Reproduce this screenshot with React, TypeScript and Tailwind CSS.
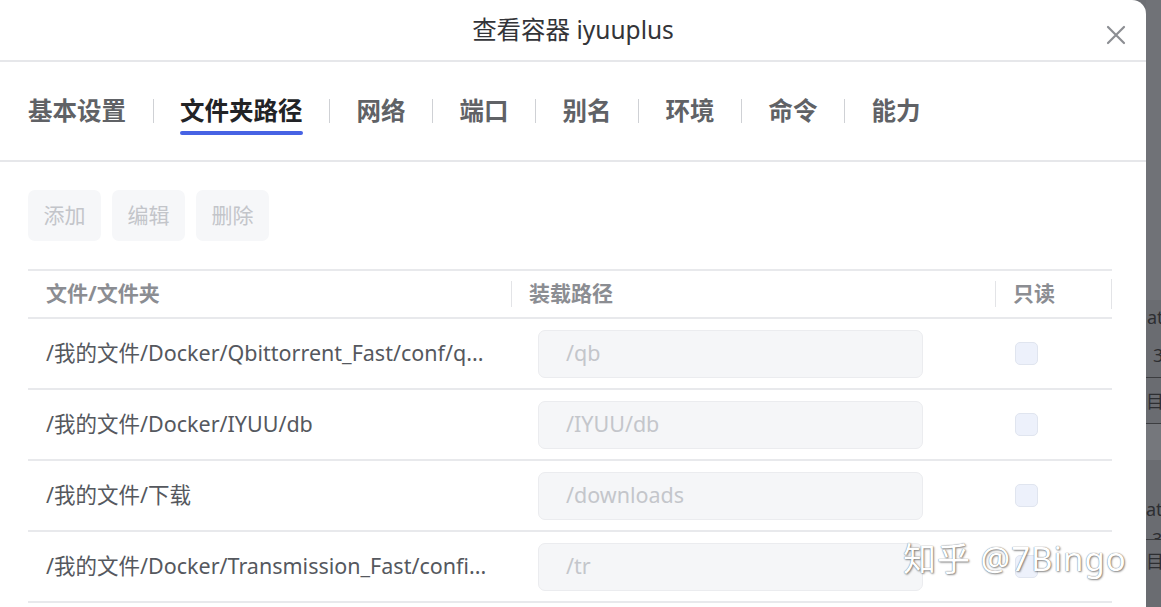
import React from 'react';

const tabs = ['基本设置', '文件夹路径', '网络', '端口', '别名', '环境', '命令', '能力'];

const rows = [
  { src: '/我的文件/Docker/Qbittorrent_Fast/conf/q...', dst: '/qb' },
  { src: '/我的文件/Docker/IYUU/db', dst: '/IYUU/db' },
  { src: '/我的文件/下载', dst: '/downloads' },
  { src: '/我的文件/Docker/Transmission_Fast/confi...', dst: '/tr' },
];

const font = "font-['Noto_Sans','Noto_Sans_CJK_SC',sans-serif]";

const Tab: React.FC<{ label: string; active: boolean; last: boolean }> = ({ label, active, last }) => (
  <div className="flex items-center">
    <div className="relative">
      <span className={`text-[24.5px] leading-[32px] font-bold ${active ? 'text-[#222326]' : 'text-[#606266]'}`}>{label}</span>
      {active && <div className="absolute left-0 right-0 -bottom-[8px] h-[4px] rounded-full bg-[#4763e4]" />}
    </div>
    {!last && <div className="mx-[26.5px] h-[24px] w-px bg-[#cfd1d5]" />}
  </div>
);

const App: React.FC = () => {
  return (
    <div className={`relative flex h-[607px] w-[1161px] overflow-hidden bg-[#6d6f74] ${font}`}>
      <div className="flex h-full w-[1146px] flex-col rounded-tr-[14px] bg-white">
        {/* header */}
        <div className="relative flex h-[62px] shrink-0 items-center justify-center border-b-2 border-[#e6e7ea]">
          <span className="text-[24.5px] text-[#333438]">查看容器 iyuuplus</span>
          <button className="absolute right-[20px] top-[25px] text-[#8c8e93]">
            <svg width="20" height="20" viewBox="0 0 20 20" fill="none" stroke="currentColor" strokeWidth="2.2" strokeLinecap="round">
              <path d="M2 2L18 18M18 2L2 18" />
            </svg>
          </button>
        </div>

        {/* tabs */}
        <div className="flex h-[100px] shrink-0 items-center border-b-2 border-[#e6e7ea] px-[28px]">
          {tabs.map((t, i) => (
            <Tab key={t} label={t} active={i === 1} last={i === tabs.length - 1} />
          ))}
        </div>

        {/* content */}
        <div className="flex flex-col pl-[28px] pr-[34px] pt-[28px]">
          <div className="flex gap-[11px]">
            {['添加', '编辑', '删除'].map((b) => (
              <button key={b} className="flex h-[51px] w-[73px] items-center justify-center rounded-[7px] bg-[#f6f7f9] text-[21px] text-[#c3c5ca]">
                {b}
              </button>
            ))}
          </div>

          <div className="mt-[28px] flex flex-col">
            <div className="flex h-[50px] items-center border-y-2 border-[#e8e9ec] text-[21px] font-bold text-[#8b8d92]">
              <div className="w-[483px] pl-[18px]">文件/文件夹</div>
              <div className="h-[26px] w-px bg-[#e3e4e7]" />
              <div className="w-[483px] pl-[17px]">装载路径</div>
              <div className="h-[26px] w-px bg-[#e3e4e7]" />
              <div className="flex-1 pl-[17px]">只读</div>
              <div className="h-[30px] w-px bg-[#e3e4e7]" />
            </div>
            {rows.map((r) => (
              <div key={r.src} className="flex h-[71px] items-center border-b-2 border-[#e8e9ec]">
                <div className="w-[484px] truncate pl-[18px] pr-[10px] text-[21.5px] text-[#55585e]">{r.src}</div>
                <div className="w-[484px] pl-[26px]">
                  <div className="flex h-[48px] w-[385px] items-center rounded-[7px] border border-[#ebecef] bg-[#f5f6f8] pl-[27px] text-[21.5px] text-[#c4c6cb]">
                    {r.dst}
                  </div>
                </div>
                <div className="flex-1 pl-[19px]">
                  <div className="h-[23px] w-[23px] rounded-[5px] border border-[#e0e5ef] bg-[#edf1fb]" />
                </div>
              </div>
            ))}
          </div>
        </div>
      </div>

      {/* backdrop peek */}
      <div className="flex flex-1 flex-col overflow-hidden whitespace-nowrap text-[18px] leading-none text-[#2d2e31]">
        <div className="h-[300px] shrink-0 bg-[#707277]" />
        <div className="h-[78px] shrink-0 border-b border-[#3c3d40] bg-[#6a6c71] pl-[1px]">
          <div className="pt-[8px]">at</div>
          <div className="pl-[6px] pt-[20px]">3</div>
        </div>
        <div className="h-[46px] shrink-0 border-b border-[#3c3d40] bg-[#6a6c71] pt-[14px]">目多</div>
        <div className="h-[36px] shrink-0 bg-[#75777c]" />
        <div className="h-[80px] shrink-0 border-b border-[#3c3d40] bg-[#6a6c71]">
          <div className="pt-[40px]">at</div>
          <div className="pl-[6px] pt-[12px]">3</div>
        </div>
        <div className="flex-1 bg-[#6a6c71] pt-[12px]">目多</div>
      </div>

      {/* watermark */}
      <div className="pointer-events-none absolute left-[903px] top-[534px] text-[33px] tracking-[1px] text-white [text-shadow:0_0_1px_#555,1px_1px_2px_rgba(0,0,0,0.45)]">
        知乎 @7Bingo
      </div>
    </div>
  );
};

export default App;
